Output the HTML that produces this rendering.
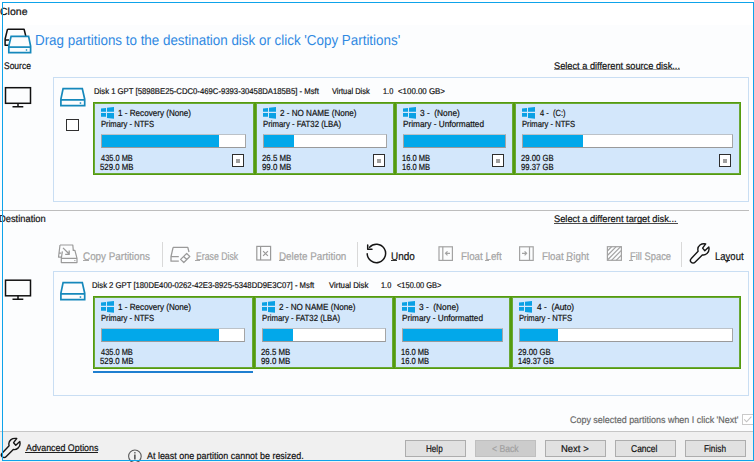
<!DOCTYPE html>
<html><head><meta charset="utf-8">
<style>
*{margin:0;padding:0;box-sizing:border-box}
html,body{width:754px;height:462px;overflow:hidden;background:#fff}
body{position:relative;font-family:"Liberation Sans",sans-serif;color:#1e1e1e}
.a{position:absolute}
.tx{position:absolute;white-space:nowrap;line-height:1;transform-origin:0 0;text-rendering:geometricPrecision;-webkit-text-stroke:0.2px currentColor}
.bg{position:absolute;left:0;top:25px;width:754px;height:406px;background:#fcfdfe}
.footer{position:absolute;left:0;top:431px;width:754px;height:31px;background:#f0f0f0;border-top:1px solid #c6c6c6}
.panel{position:absolute;left:53px;width:696px;border:1px solid #c9def3;background:#fcfdfe}
.pf{position:absolute;border:1px solid #549b0e;box-shadow:inset 0 0 0 1px #6aa936;background:#d3e7fb}
.bar{position:absolute;height:14px;border:1px solid #a5a5a5;border-top-color:#bcc2c8;border-bottom-color:#9a9a9a;background:#fff}
.fill{position:absolute;left:0;top:0;bottom:0;background:#02a8ea}
.cb{position:absolute;width:12px;height:13px;border:1px solid #2e2e2e;background:#fff}
.cb:after{content:"";position:absolute;left:3px;top:3.5px;width:4px;height:4px;background:#a0a0a0}
.tbsep{position:absolute;top:242px;width:1px;height:25px;background:#d9d9d9}
.btn{position:absolute;top:440px;width:61px;height:17px;border:1px solid #adadad;background:#e1e1e1}
.ul{position:absolute;height:1px;background:#333}
</style></head>
<body>
<div class="bg"></div>

<svg class="a" style="left:0;top:24px" width="36" height="34" viewBox="0 24 36 34">
  <path d="M7.5 29.2 H24.1 L26 37 M7.5 29.2 L5.1 39 V45.2 H9 M5.1 40 H9" fill="none" stroke="#111" stroke-width="1.5" stroke-linejoin="round"/>
  <path d="M11.1 36.4 H28.6 L30.6 46 V52.6 H8.8 V46 Z" fill="#fcfdfe" stroke="#1588bb" stroke-width="1.7" stroke-linejoin="miter"/>
  <path d="M8.8 47.1 H30.6" stroke="#1588bb" stroke-width="1.7"/>
  <rect x="25.8" y="49.3" width="1.4" height="1.4" fill="#1588bb"/>
</svg>
<div class="ul" style="left:554px;top:69px;width:126px;background:#959595"></div>

<svg class="a" style="left:0;top:80px" width="40" height="32" viewBox="0 80 40 32">
  <rect x="5.5" y="87.7" width="25" height="15.6" fill="none" stroke="#111" stroke-width="1.5"/>
  <path d="M18 103.3 V106.5 M12.5 106.8 H23.3" stroke="#111" stroke-width="1.5"/>
</svg>

<div class="panel" style="top:77px;height:125px"></div>
<svg class="a" style="left:56px;top:84px" width="34" height="26" viewBox="0 0 34 26">
  <path d="M7.1 4.6 H26.3 L28.7 15.2 V21.6 H4.9 V15.2 Z M4.9 15.8 H28.7" fill="none" stroke="#1588bb" stroke-width="1.7" stroke-linejoin="miter"/>
  <rect x="23.7" y="18.3" width="1.5" height="1.5" fill="#1588bb"/>
</svg>
<div class="a" style="left:66px;top:119px;width:13px;height:12px;border:1.3px solid #303030;background:#fff"></div>

<div class="pf" style="left:93px;top:102px;width:162px;height:73px"></div><svg class="a" style="left:101px;top:107px" width="14" height="13" viewBox="0 0 14 13"><path d="M0 1.5 L5 0.9 V4.8 H0Z M6 0.8 L13 0 V4.8 H6Z M0 5.9 H5 V9.8 L0 9.7Z M6 5.9 H13 V11.8 L6 11Z" fill="#0aa0e4"/></svg><div class="bar" style="left:101px;top:134px;width:145px"><div class="fill" style="width:117px"></div></div><div class="cb" style="left:232px;top:154px"></div>
<div class="pf" style="left:255px;top:102px;width:140px;height:73px"></div><svg class="a" style="left:263px;top:107px" width="14" height="13" viewBox="0 0 14 13"><path d="M0 1.5 L5 0.9 V4.8 H0Z M6 0.8 L13 0 V4.8 H6Z M0 5.9 H5 V9.8 L0 9.7Z M6 5.9 H13 V11.8 L6 11Z" fill="#0aa0e4"/></svg><div class="bar" style="left:263px;top:134px;width:124px"><div class="fill" style="width:30px"></div></div><div class="cb" style="left:373px;top:154px"></div>
<div class="pf" style="left:395px;top:102px;width:119px;height:73px"></div><svg class="a" style="left:403px;top:107px" width="14" height="13" viewBox="0 0 14 13"><path d="M0 1.5 L5 0.9 V4.8 H0Z M6 0.8 L13 0 V4.8 H6Z M0 5.9 H5 V9.8 L0 9.7Z M6 5.9 H13 V11.8 L6 11Z" fill="#0aa0e4"/></svg><div class="bar" style="left:403px;top:134px;width:103px"><div class="fill" style="width:101px"></div></div><div class="cb" style="left:492px;top:154px"></div>
<div class="pf" style="left:514px;top:102px;width:227px;height:73px"></div><svg class="a" style="left:522px;top:107px" width="14" height="13" viewBox="0 0 14 13"><path d="M0 1.5 L5 0.9 V4.8 H0Z M6 0.8 L13 0 V4.8 H6Z M0 5.9 H5 V9.8 L0 9.7Z M6 5.9 H13 V11.8 L6 11Z" fill="#0aa0e4"/></svg><div class="bar" style="left:522px;top:134px;width:211px"><div class="fill" style="width:60px"></div></div><div class="cb" style="left:719px;top:154px"></div>

<div class="a" style="left:0;top:210px;width:749px;height:1px;background:#bdbdbd"></div>
<div class="ul" style="left:554px;top:223px;width:123.5px;background:#4a4a4a"></div>

<div id="toolbar">
<svg class="a" style="left:54px;top:240px" width="28" height="26" viewBox="0 0 28 26" fill="none" stroke="#9a9a9a" stroke-width="1.2" stroke-linejoin="round">
  <path d="M6 5 H18.8 L19.3 10.4 M6 5 L4.5 17.2 H7.3 M4.6 13.2 H7.3"/>
  <path d="M18.8 10.4 H20.9 L23 18.3 V22.6 H7.3 V18.3 L8.4 11.3 M7.3 18.3 H23"/>
  <path d="M9 7.9 L14.9 13.8 M11.2 14.4 H15.2 V10.6" stroke-width="1.3"/>
  <rect x="20.3" y="20" width="1.1" height="1.1" fill="#9a9a9a" stroke="none"/>
</svg>
<div class="tbsep" style="left:162px"></div>
<svg class="a" style="left:165px;top:240px" width="28" height="26" viewBox="0 0 28 26" fill="none" stroke="#9a9a9a" stroke-width="1.3" stroke-linejoin="round">
  <path d="M8.1 7.3 H22.8 L24 12 M8.1 7.3 L6 16.6 V21.2 H13.8 M6 16.6 H13.8"/>
  <path d="M15.6 19.4 L21.7 13.5 L24.8 16.5 L18.8 22.5 Z M18.6 16.5 L21.8 19.5" stroke-width="1.2"/>
</svg>
<svg class="a" style="left:252px;top:240px" width="24" height="26" viewBox="0 0 24 26" fill="none" stroke="#9a9a9a" stroke-width="1.2">
  <rect x="4.8" y="6.4" width="13.8" height="13.6"/>
  <path d="M8.6 6.4 V20 M11.1 11.1 L15.9 15.9 M15.9 11.1 L11.1 15.9" />
</svg>
<div class="tbsep" style="left:357px"></div>
<svg class="a" style="left:362px;top:240px" width="28" height="26" viewBox="0 0 28 26" fill="none" stroke="#151515" stroke-width="1.5" stroke-linecap="round">
  <path d="M5.2 13.8 A9.2 9.2 0 1 0 7.6 7.2"/>
  <path d="M5.7 5 L5.7 9.3 L10 9.3" stroke-linejoin="round"/>
</svg>
<svg class="a" style="left:434px;top:242px" width="24" height="22" viewBox="0 0 24 22" fill="none" stroke="#a3a3a3" stroke-width="1.2">
  <rect x="5" y="4.8" width="13.4" height="13.6"/>
  <path d="M8.8 4.8 V18.4 M16 11.3 H11.6 M13.5 9.3 L11.5 11.3 L13.5 13.3"/>
</svg>
<svg class="a" style="left:514px;top:242px" width="24" height="22" viewBox="0 0 24 22" fill="none" stroke="#a3a3a3" stroke-width="1.2">
  <rect x="5.6" y="4.8" width="13.6" height="13.6"/>
  <path d="M15.5 4.8 V18.4 M8 11.3 H12.5 M10.6 9.3 L12.6 11.3 L10.6 13.3"/>
</svg>
<svg class="a" style="left:602px;top:242px" width="24" height="22" viewBox="0 0 24 22" fill="none" stroke="#a3a3a3" stroke-width="1.2">
  <rect x="5.4" y="4.7" width="14" height="13.6"/>
  <path d="M5.4 9 L9.7 4.7 M5.4 13.5 L14.2 4.7 M5.4 18 L18.7 4.7 M9.5 18.3 L19.4 8.4 M14.2 18.3 L19.4 13.1"/>
</svg>
<div class="tbsep" style="left:681px"></div>
<svg class="a" style="left:686px;top:240px" width="28" height="26" viewBox="0 0 28 26" fill="none" stroke="#151515" stroke-width="1.4" stroke-linejoin="round">
  <path d="M12.1 11.2 C11.5 9 12 6.5 14 5 C15.5 3.9 17.5 3.5 19.7 3.9 L16.6 8.1 L18.8 10.7 L22.8 7 C23.4 9.5 22.8 12 21 13.5 C19.5 14.8 17.6 15.2 16.3 14.9 L9 22.2 C8 23.2 6.2 23.2 5.2 22.2 C4.2 21.2 4.3 19.5 5.3 18.5 Z"/>
</svg>
</div>

<div class="ul" style="left:82.9px;top:260px;width:6.4px;background:#a8a8a8"></div><div class="ul" style="left:195.2px;top:260px;width:5.3px;background:#a8a8a8"></div><div class="ul" style="left:278.7px;top:260px;width:6.5px;background:#a8a8a8"></div><div class="ul" style="left:391.1px;top:260px;width:6.4px;background:#333"></div><div class="ul" style="left:484.8px;top:260px;width:4.7px;background:#a8a8a8"></div><div class="ul" style="left:566px;top:260px;width:5.5px;background:#a8a8a8"></div><div class="ul" style="left:629.2px;top:260px;width:4.3px;background:#a8a8a8"></div><div class="ul" style="left:724.7px;top:260px;width:5.1px;background:#333"></div>

<svg class="a" style="left:0;top:272px" width="40" height="32" viewBox="0 272 40 32">
  <rect x="5.5" y="280.2" width="25" height="15.6" fill="none" stroke="#111" stroke-width="1.5"/>
  <path d="M18 295.8 V299 M12.5 299.3 H23.3" stroke="#111" stroke-width="1.5"/>
</svg>

<div class="panel" style="top:271px;height:125px"></div>
<svg class="a" style="left:56px;top:278px" width="34" height="26" viewBox="0 0 34 26">
  <path d="M7.1 4.6 H26.3 L28.7 15.2 V21.6 H4.9 V15.2 Z M4.9 15.8 H28.7" fill="none" stroke="#1588bb" stroke-width="1.7" stroke-linejoin="miter"/>
  <rect x="23.7" y="18.3" width="1.5" height="1.5" fill="#1588bb"/>
</svg>

<div class="pf" style="left:93px;top:296px;width:161px;height:73px"></div><svg class="a" style="left:101px;top:301px" width="14" height="13" viewBox="0 0 14 13"><path d="M0 1.5 L5 0.9 V4.8 H0Z M6 0.8 L13 0 V4.8 H6Z M0 5.9 H5 V9.8 L0 9.7Z M6 5.9 H13 V11.8 L6 11Z" fill="#0aa0e4"/></svg><div class="bar" style="left:101px;top:328px;width:144px"><div class="fill" style="width:117px"></div></div>
<div class="pf" style="left:254px;top:296px;width:140px;height:73px"></div><svg class="a" style="left:262px;top:301px" width="14" height="13" viewBox="0 0 14 13"><path d="M0 1.5 L5 0.9 V4.8 H0Z M6 0.8 L13 0 V4.8 H6Z M0 5.9 H5 V9.8 L0 9.7Z M6 5.9 H13 V11.8 L6 11Z" fill="#0aa0e4"/></svg><div class="bar" style="left:262px;top:328px;width:124px"><div class="fill" style="width:30px"></div></div>
<div class="pf" style="left:394px;top:296px;width:117px;height:73px"></div><svg class="a" style="left:402px;top:301px" width="14" height="13" viewBox="0 0 14 13"><path d="M0 1.5 L5 0.9 V4.8 H0Z M6 0.8 L13 0 V4.8 H6Z M0 5.9 H5 V9.8 L0 9.7Z M6 5.9 H13 V11.8 L6 11Z" fill="#0aa0e4"/></svg><div class="bar" style="left:402px;top:328px;width:101px"><div class="fill" style="width:99px"></div></div>
<div class="pf" style="left:511px;top:296px;width:230px;height:73px"></div><svg class="a" style="left:519px;top:301px" width="14" height="13" viewBox="0 0 14 13"><path d="M0 1.5 L5 0.9 V4.8 H0Z M6 0.8 L13 0 V4.8 H6Z M0 5.9 H5 V9.8 L0 9.7Z M6 5.9 H13 V11.8 L6 11Z" fill="#0aa0e4"/></svg><div class="bar" style="left:519px;top:328px;width:214px"><div class="fill" style="width:38px"></div></div>
<div class="a" style="left:93px;top:371px;width:160px;height:2px;background:#1f7fd0"></div>

<div class="a" style="left:742px;top:414px;width:13px;height:11px;border:1px solid #cacaca;background:#fff"></div>
<svg class="a" style="left:742px;top:414px" width="12" height="11" viewBox="0 0 12 11"><path d="M2.2 5.3 L4.6 7.8 L9.4 2.6" fill="none" stroke="#c2c2c2" stroke-width="1.1"/></svg>

<div class="footer"></div>
<svg class="a" style="left:0;top:434px" width="30" height="28" viewBox="0 0 30 28" fill="none" stroke="#151515" stroke-width="1.4" stroke-linejoin="round">
  <path transform="translate(-3,0.6)" d="M12.1 11.2 C11.5 9 12 6.5 14 5 C15.5 3.9 17.5 3.5 19.7 3.9 L16.6 8.1 L18.8 10.7 L22.8 7 C23.4 9.5 22.8 12 21 13.5 C19.5 14.8 17.6 15.2 16.3 14.9 L9 22.2 C8 23.2 6.2 23.2 5.2 22.2 C4.2 21.2 4.3 19.5 5.3 18.5 Z"/>
</svg>
<div class="ul" style="left:25.3px;top:452px;width:73px;background:#1e1e1e"></div>
<svg class="a" style="left:124px;top:446px" width="24" height="16" viewBox="0 0 24 16">
  <circle cx="10.9" cy="10.3" r="6.3" fill="none" stroke="#5a5a5a" stroke-width="1.1"/>
  <path d="M10.9 8.5 V13.5" stroke="#222" stroke-width="1.2"/>
  <rect x="10.3" y="6.2" width="1.2" height="1.2" fill="#222"/>
</svg>
<div class="btn" style="left:405px;"></div>
<div class="btn" style="left:475px;background:#cccccc;border-color:#bfbfbf"></div>
<div class="btn" style="left:545px;"></div>
<div class="btn" style="left:615px;"></div>
<div class="btn" style="left:685px;"></div>


<div class="tx" style="left:-0.02px;top:8px;font-size:10.3px;color:#111;transform:scaleX(1.0224);">Clone</div>
<div class="tx" style="left:34.82px;top:34px;font-size:14.5px;color:#3089e2;transform:scaleX(0.9231);-webkit-text-stroke:0">Drag partitions to the destination disk or click 'Copy Partitions'</div>
<div class="tx" style="left:3.81px;top:62px;font-size:9.6px;color:#111;transform:scaleX(0.8838);">Source</div>
<div class="tx" style="left:554.00px;top:62px;font-size:9.6px;color:#111;transform:scaleX(0.9617);">Select a different source disk...</div>
<div class="tx" style="left:93.56px;top:87px;font-size:8.4px;color:#111;transform:scaleX(0.9225);">Disk 1 GPT [5898BE25-CDC0-469C-9393-30458DA185B5] - Msft</div>
<div class="tx" style="left:332.12px;top:87px;font-size:8.4px;color:#111;transform:scaleX(0.8949);">Virtual Disk</div>
<div class="tx" style="left:383.22px;top:87px;font-size:8.4px;color:#111;transform:scaleX(0.8790);">1.0</div>
<div class="tx" style="left:398.44px;top:87px;font-size:8.4px;color:#111;transform:scaleX(0.9422);">&lt;100.00 GB&gt;</div>
<div class="tx" style="left:-1.08px;top:215px;font-size:9.9px;color:#111;transform:scaleX(0.9454);">Destination</div>
<div class="tx" style="left:554.00px;top:215px;font-size:9.6px;color:#111;transform:scaleX(0.9673);">Select a different target disk...</div>
<div class="tx" style="left:82.72px;top:252px;font-size:11px;color:#a4a4a4;transform:scaleX(0.8975);">Copy Partitions</div>
<div class="tx" style="left:195.84px;top:252px;font-size:11px;color:#a4a4a4;transform:scaleX(0.7919);">Erase Disk</div>
<div class="tx" style="left:279.06px;top:252px;font-size:11px;color:#a4a4a4;transform:scaleX(0.8954);">Delete Partition</div>
<div class="tx" style="left:391.28px;top:252px;font-size:11px;color:#111;transform:scaleX(0.9047);">Undo</div>
<div class="tx" style="left:461.28px;top:252px;font-size:11px;color:#a4a4a4;transform:scaleX(0.8894);">Float Left</div>
<div class="tx" style="left:542.00px;top:252px;font-size:11px;color:#a4a4a4;transform:scaleX(0.8834);">Float Right</div>
<div class="tx" style="left:629.56px;top:252px;font-size:11px;color:#a4a4a4;transform:scaleX(0.8503);">Fill Space</div>
<div class="tx" style="left:715.22px;top:252px;font-size:11px;color:#111;transform:scaleX(0.8665);">Layout</div>
<div class="tx" style="left:92.44px;top:281px;font-size:8.4px;color:#111;transform:scaleX(0.9201);">Disk 2 GPT [180DE400-0262-42E3-8925-5348DD9E3C07] - Msft</div>
<div class="tx" style="left:328.78px;top:281px;font-size:8.4px;color:#111;transform:scaleX(0.9328);">Virtual Disk</div>
<div class="tx" style="left:381.00px;top:281px;font-size:8.4px;color:#111;transform:scaleX(0.8790);">1.0</div>
<div class="tx" style="left:396.78px;top:281px;font-size:8.4px;color:#111;transform:scaleX(0.8919);">&lt;150.00 GB&gt;</div>
<div class="tx" style="left:570.00px;top:416px;font-size:9.6px;color:#6a6a6a;transform:scaleX(0.9321);">Copy selected partitions when I click 'Next'</div>
<div class="tx" style="left:25.84px;top:444px;font-size:9.6px;color:#111;transform:scaleX(0.9233);">Advanced Options</div>
<div class="tx" style="left:146.84px;top:452px;font-size:9.6px;color:#111;transform:scaleX(0.9294);">At least one partition cannot be resized.</div>
<div class="tx" style="left:426.28px;top:445px;font-size:10px;color:#111;transform:scaleX(0.8109);">Help</div>
<div class="tx" style="left:492.30px;top:445px;font-size:10px;color:#a0a0a0;transform:scaleX(0.8652);">&lt; Back</div>
<div class="tx" style="left:560.56px;top:445px;font-size:10px;color:#111;transform:scaleX(0.9482);">Next &gt;</div>
<div class="tx" style="left:631.00px;top:445px;font-size:10px;color:#111;transform:scaleX(0.8492);">Cancel</div>
<div class="tx" style="left:703.78px;top:445px;font-size:10px;color:#111;transform:scaleX(0.8244);">Finish</div>
<div class="tx" style="left:118.00px;top:109px;font-size:8.9px;color:#111;transform:scaleX(0.9136);">1 - Recovery (None)</div>
<div class="tx" style="left:101.44px;top:120px;font-size:8.9px;color:#111;transform:scaleX(0.8625);">Primary - NTFS</div>
<div class="tx" style="left:101.34px;top:154px;font-size:8.9px;color:#111;transform:scaleX(0.8364);">435.0 MB</div>
<div class="tx" style="left:100.44px;top:163px;font-size:8.9px;color:#111;transform:scaleX(0.8818);">529.0 MB</div>
<div class="tx" style="left:280.00px;top:109px;font-size:8.9px;color:#111;transform:scaleX(0.9117);">2 - NO NAME (None)</div>
<div class="tx" style="left:263.44px;top:120px;font-size:8.9px;color:#111;transform:scaleX(0.8755);">Primary - FAT32 (LBA)</div>
<div class="tx" style="left:262.44px;top:154px;font-size:8.9px;color:#111;transform:scaleX(0.8856);">26.5 MB</div>
<div class="tx" style="left:262.44px;top:163px;font-size:8.9px;color:#111;transform:scaleX(0.8856);">99.0 MB</div>
<div class="tx" style="left:420.00px;top:109px;font-size:8.9px;color:#111;transform:scaleX(0.9379);">3 -&nbsp; (None)</div>
<div class="tx" style="left:403.44px;top:120px;font-size:8.9px;color:#111;transform:scaleX(0.9279);">Primary - Unformatted</div>
<div class="tx" style="left:402.44px;top:154px;font-size:8.9px;color:#111;transform:scaleX(0.8520);">16.0 MB</div>
<div class="tx" style="left:402.44px;top:163px;font-size:8.9px;color:#111;transform:scaleX(0.8520);">16.0 MB</div>
<div class="tx" style="left:539.90px;top:109px;font-size:8.9px;color:#111;transform:scaleX(0.8496);">4 -&nbsp; (C:)</div>
<div class="tx" style="left:522.44px;top:120px;font-size:8.9px;color:#111;transform:scaleX(0.8625);">Primary - NTFS</div>
<div class="tx" style="left:521.44px;top:154px;font-size:8.9px;color:#111;transform:scaleX(0.8669);">29.00 GB</div>
<div class="tx" style="left:521.44px;top:163px;font-size:8.9px;color:#111;transform:scaleX(0.8669);">99.37 GB</div>
<div class="tx" style="left:118.00px;top:303px;font-size:8.9px;color:#111;transform:scaleX(0.9136);">1 - Recovery (None)</div>
<div class="tx" style="left:101.44px;top:314px;font-size:8.9px;color:#111;transform:scaleX(0.8625);">Primary - NTFS</div>
<div class="tx" style="left:101.34px;top:348px;font-size:8.9px;color:#111;transform:scaleX(0.8364);">435.0 MB</div>
<div class="tx" style="left:100.44px;top:357px;font-size:8.9px;color:#111;transform:scaleX(0.8818);">529.0 MB</div>
<div class="tx" style="left:279.00px;top:303px;font-size:8.9px;color:#111;transform:scaleX(0.9117);">2 - NO NAME (None)</div>
<div class="tx" style="left:262.44px;top:314px;font-size:8.9px;color:#111;transform:scaleX(0.8755);">Primary - FAT32 (LBA)</div>
<div class="tx" style="left:261.44px;top:348px;font-size:8.9px;color:#111;transform:scaleX(0.8856);">26.5 MB</div>
<div class="tx" style="left:261.44px;top:357px;font-size:8.9px;color:#111;transform:scaleX(0.8856);">99.0 MB</div>
<div class="tx" style="left:419.00px;top:303px;font-size:8.9px;color:#111;transform:scaleX(0.9379);">3 -&nbsp; (None)</div>
<div class="tx" style="left:402.44px;top:314px;font-size:8.9px;color:#111;transform:scaleX(0.9279);">Primary - Unformatted</div>
<div class="tx" style="left:401.44px;top:348px;font-size:8.9px;color:#111;transform:scaleX(0.8520);">16.0 MB</div>
<div class="tx" style="left:401.44px;top:357px;font-size:8.9px;color:#111;transform:scaleX(0.8520);">16.0 MB</div>
<div class="tx" style="left:536.90px;top:303px;font-size:8.9px;color:#111;transform:scaleX(0.9406);">4 -&nbsp; (Auto)</div>
<div class="tx" style="left:519.44px;top:314px;font-size:8.9px;color:#111;transform:scaleX(0.8625);">Primary - NTFS</div>
<div class="tx" style="left:518.44px;top:348px;font-size:8.9px;color:#111;transform:scaleX(0.8669);">29.00 GB</div>
<div class="tx" style="left:518.44px;top:357px;font-size:8.9px;color:#111;transform:scaleX(0.8483);">149.37 GB</div>

<div class="a" style="left:2px;top:2px;width:752px;height:459px;border:1px solid #0ea3ea"></div>
</body></html>
